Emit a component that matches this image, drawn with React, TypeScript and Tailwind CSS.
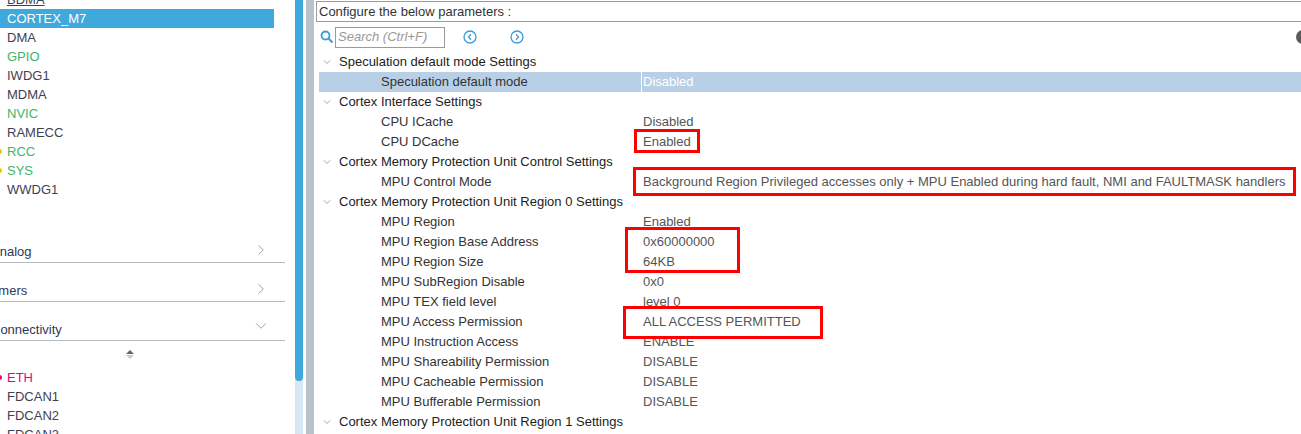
import { ChevronDown, ChevronRight } from "lucide-react";

type Peripheral = { name: string; tone?: "green" | "pink"; selected?: boolean; underline?: boolean; mark?: boolean };

const systemCore: Peripheral[] = [
  { name: "BDMA", underline: true },
  { name: "CORTEX_M7", selected: true },
  { name: "DMA" },
  { name: "GPIO", tone: "green" },
  { name: "IWDG1" },
  { name: "MDMA" },
  { name: "NVIC", tone: "green" },
  { name: "RAMECC" },
  { name: "RCC", tone: "green", mark: true },
  { name: "SYS", tone: "green", mark: true },
  { name: "WWDG1" },
];

const connectivity: Peripheral[] = [
  { name: "ETH", tone: "pink" },
  { name: "FDCAN1" },
  { name: "FDCAN2" },
  { name: "FDCAN3" },
];

type Row =
  | { kind: "group"; label: string }
  | { kind: "param"; label: string; value: string; active?: boolean };

const rows: Row[] = [
  { kind: "group", label: "Speculation default mode Settings" },
  { kind: "param", label: "Speculation default mode", value: "Disabled", active: true },
  { kind: "group", label: "Cortex Interface Settings" },
  { kind: "param", label: "CPU ICache", value: "Disabled" },
  { kind: "param", label: "CPU DCache", value: "Enabled" },
  { kind: "group", label: "Cortex Memory Protection Unit Control Settings" },
  {
    kind: "param",
    label: "MPU Control Mode",
    value: "Background Region Privileged accesses only + MPU Enabled during hard fault, NMI and FAULTMASK handlers",
  },
  { kind: "group", label: "Cortex Memory Protection Unit Region 0 Settings" },
  { kind: "param", label: "MPU Region", value: "Enabled" },
  { kind: "param", label: "MPU Region Base Address", value: "0x60000000" },
  { kind: "param", label: "MPU Region Size", value: "64KB" },
  { kind: "param", label: "MPU SubRegion Disable", value: "0x0" },
  { kind: "param", label: "MPU TEX field level", value: "level 0" },
  { kind: "param", label: "MPU Access Permission", value: "ALL ACCESS PERMITTED" },
  { kind: "param", label: "MPU Instruction Access", value: "ENABLE" },
  { kind: "param", label: "MPU Shareability Permission", value: "DISABLE" },
  { kind: "param", label: "MPU Cacheable Permission", value: "DISABLE" },
  { kind: "param", label: "MPU Bufferable  Permission", value: "DISABLE" },
  { kind: "group", label: "Cortex Memory Protection Unit Region 1 Settings" },
];

const PeripheralRow = ({ item }: { item: Peripheral }) => {
  const color = item.selected
    ? "text-white"
    : item.tone === "green"
      ? "text-[#3fb36b]"
      : item.tone === "pink"
        ? "text-[#e5007f]"
        : "text-[#3f3f52]";
  return (
    <div
      className={`relative flex h-[19px] w-[274px] items-center pl-[7px] ${item.selected ? "bg-[#3ea9dc]" : ""} ${color}`}
    >
      {item.mark && <span className="absolute -left-[3px] top-[7px] h-[5px] w-[5px] rounded-full bg-[#f2c200]" />}
      {item.tone === "pink" && <span className="absolute -left-[3px] top-[7px] h-[5px] w-[5px] rounded-full bg-[#e5007f]" />}
      <span className={item.underline ? "underline" : ""}>{item.name}</span>
    </div>
  );
};

const Category = ({ label, shift, open }: { label: string; shift: string; open?: boolean }) => (
  <div className="flex h-[39px] w-[285px] items-end justify-between border-b border-[#b5bcc4] pb-[1px] pr-[15px] text-[#2e3a55]">
    <span className={shift}>{label}</span>
    {open ? (
      <ChevronDown size={18} strokeWidth={0.9} className="mb-[4px] text-[#6f6f6f]" />
    ) : (
      <ChevronRight size={18} strokeWidth={0.9} className="mb-[2px] text-[#6f6f6f]" />
    )}
  </div>
);

const ParamRow = ({ row }: { row: Row }) => {
  if (row.kind === "group") {
    return (
      <div className="flex h-[20px] items-center text-[#1c1c1c]">
        <ChevronDown size={12} strokeWidth={1.3} className="ml-[321px] text-[#777]" />
        <span className="ml-[6px]">{row.label}</span>
      </div>
    );
  }
  return (
    <div className={`ml-[319px] flex h-[20px] items-center ${row.active ? "bg-[#b8cfe6]" : ""}`}>
      <span className="w-[322px] pl-[62px] text-[#333]">{row.label}</span>
      <span className={`h-full w-px ${row.active ? "bg-white" : ""}`} />
      <span className={`flex h-full items-center whitespace-nowrap pl-[1px] ${row.active ? "text-white" : "text-[#555]"}`}>
        {row.value}
      </span>
    </div>
  );
};

export default function App() {
  return (
    <div className="relative flex h-[434px] w-[1301px] overflow-hidden bg-white font-['Liberation_Sans',Arial,sans-serif] text-[13px]">
      {/* left peripheral list */}
      <div className="w-[295px] shrink-0">
        <div className="-mt-[10px]">
          {systemCore.map((p) => (
            <PeripheralRow key={p.name} item={p} />
          ))}
        </div>
        <div className="h-[25px]" />
        <Category label="Analog" shift="-ml-[9px]" />
        <Category label="Timers" shift="-ml-[12px]" />
        <Category label="Connectivity" shift="-ml-[9px]" open />
        <div className="flex h-[27px] w-[260px] flex-col items-center justify-center pb-[1px]">
          <span className="h-0 w-0 border-x-[4px] border-b-[4px] border-x-transparent border-b-[#666]" />
          <span className="mt-[1px] h-0 w-0 border-x-[4px] border-t-[4px] border-x-transparent border-t-[#ccc]" />
        </div>
        <div>
          {connectivity.map((p) => (
            <PeripheralRow key={p.name} item={p} />
          ))}
        </div>
      </div>

      {/* scrollbar + splitter */}
      <div className="w-[8px] shrink-0 bg-[#d6e7f5]">
        <div className="h-[381px] rounded-b-[4px] bg-[#3ea9dc]" />
      </div>
      <div className="w-[3px] shrink-0" />
      <div className="w-[8px] shrink-0 bg-[#b9c1c9]" />
      <div className="w-[2px] shrink-0" />

      {/* right config panel */}
      <div className="-ml-[316px] min-w-0 flex-1 pt-[1px]">
        <div className="ml-[316px] flex h-[21px] items-center border border-r-0 border-[#9b9b9b] pl-[2px] text-[#333]">
          Configure the below parameters :
        </div>
        <div className="ml-[316px] flex h-[30px] items-center">
          <svg width="14" height="14" viewBox="0 0 14 14" className="ml-[4px]">
            <circle cx="5.5" cy="5.5" r="4" fill="none" stroke="#3a9bd9" strokeWidth="1.8" />
            <line x1="8.5" y1="8.5" x2="12.5" y2="12.5" stroke="#3a9bd9" strokeWidth="2" />
          </svg>
          <div className="ml-[1px] flex h-[21px] w-[110px] items-center border border-[#9b9b9b] pl-[2px] italic text-[#999]">
            Search (Ctrl+F)
          </div>
          <svg width="14" height="14" viewBox="0 0 14 14" className="ml-[18px]">
            <circle cx="7" cy="7" r="6" fill="none" stroke="#3a9bd9" strokeWidth="1.3" />
            <polyline points="8,4.3 5.5,7 8,9.7" fill="none" stroke="#3a9bd9" strokeWidth="1.3" />
          </svg>
          <svg width="14" height="14" viewBox="0 0 14 14" className="ml-[33px]">
            <circle cx="7" cy="7" r="6" fill="none" stroke="#3a9bd9" strokeWidth="1.3" />
            <polyline points="6,4.3 8.5,7 6,9.7" fill="none" stroke="#3a9bd9" strokeWidth="1.3" />
          </svg>
        </div>
        <div>
          {rows.map((r, i) => (
            <ParamRow key={i} row={r} />
          ))}
        </div>
      </div>

      {/* partially visible round button at the right edge */}
      <span className="absolute left-[1296px] top-[30px] h-[14px] w-[14px] rounded-full bg-[#5a5a5a]" />

      {/* red annotation boxes */}
      <span className="absolute left-[634px] top-[129px] h-[24px] w-[66px] border-[3px] border-[#ff0000]" />
      <span className="absolute left-[633px] top-[167px] h-[29px] w-[663px] border-[3px] border-[#ff0000]" />
      <span className="absolute left-[625px] top-[227px] h-[46px] w-[115px] border-[3px] border-[#ff0000]" />
      <span className="absolute left-[623px] top-[306px] h-[33px] w-[200px] border-[3px] border-[#ff0000]" />
    </div>
  );
}
